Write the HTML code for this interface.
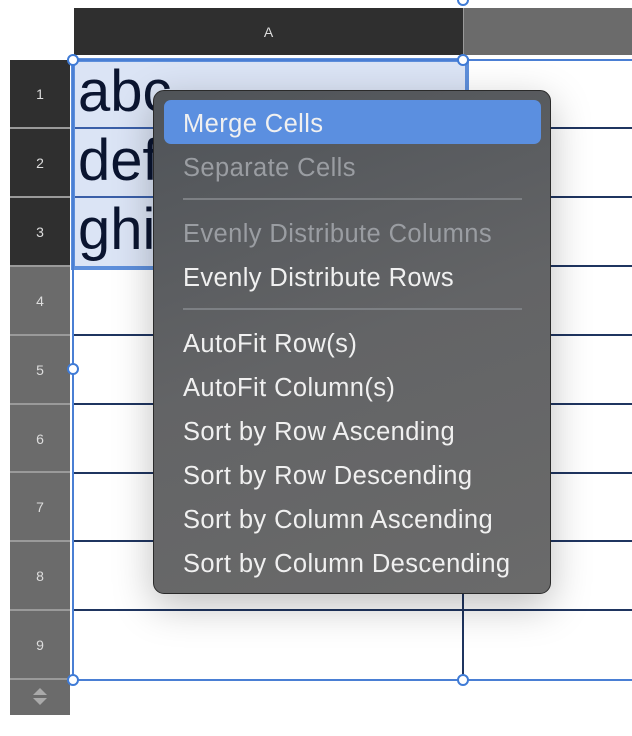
<!DOCTYPE html>
<html><head><style>
body{margin:0;width:632px;height:736px;background:#fff;position:relative;overflow:hidden;font-family:"Liberation Sans",sans-serif}
.a{position:absolute}
.rh{position:absolute;left:10px;width:60px;color:#ddd;font-size:14px;text-align:center;box-sizing:border-box;border-bottom:2px solid #9a9a9a}
.hl{position:absolute;left:73px;right:0;height:2px;background:#1f3560}
.big{position:absolute;left:78px;font-size:58px;color:#0b1530;line-height:1}
.menu{position:absolute;left:153px;top:90px;width:398px;height:504px;border-radius:11px;background:linear-gradient(160deg,#4f5358,#636466 50%,#6a6a6a);border:1px solid #2a2a2a;box-shadow:0 12px 40px rgba(0,0,0,.25);box-sizing:border-box}
.it{position:absolute;left:29px;font-size:25.5px;letter-spacing:0.4px;color:#f0f0f0;line-height:26px;white-space:nowrap}
.dis{color:#9a9da2}
.sep{position:absolute;left:29px;width:339px;height:2px;background:#7d8084}
.h{position:absolute;width:12px;height:12px;border:2px solid #3f7bd6;border-radius:50%;background:#fff;box-sizing:border-box}
</style></head><body>
<div class="a" style="left:74px;top:8px;width:389px;height:47px;background:#2f2f2f;color:#ddd;font-size:14px;text-align:center;line-height:48px">A</div>
<div class="a" style="left:464px;top:8px;width:168px;height:47px;background:#6b6b6b"></div>
<div class="a" style="left:463px;top:8px;width:1px;height:47px;background:#999"></div>

<div class="rh" style="top:60px;height:69px;line-height:69px;background:#2f2f2f">1</div>
<div class="rh" style="top:129px;height:69px;line-height:69px;background:#2f2f2f">2</div>
<div class="rh" style="top:198px;height:69px;line-height:69px;background:#2f2f2f">3</div>
<div class="rh" style="top:267px;height:69px;line-height:69px;background:#6b6b6b">4</div>
<div class="rh" style="top:336px;height:69px;line-height:69px;background:#6b6b6b">5</div>
<div class="rh" style="top:405px;height:68px;line-height:68px;background:#6b6b6b">6</div>
<div class="rh" style="top:473px;height:69px;line-height:69px;background:#6b6b6b">7</div>
<div class="rh" style="top:542px;height:69px;line-height:69px;background:#6b6b6b">8</div>
<div class="rh" style="top:611px;height:69px;line-height:69px;background:#6b6b6b">9</div>
<div class="a" style="left:10px;top:680px;width:60px;height:35px;background:#6b6b6b"></div>
<div class="a" style="left:33px;top:688px;width:0;height:0;border-left:7px solid transparent;border-right:7px solid transparent;border-bottom:7px solid #aaa"></div>
<div class="a" style="left:33px;top:698px;width:0;height:0;border-left:7px solid transparent;border-right:7px solid transparent;border-top:7px solid #aaa"></div>

<div class="hl" style="top:127px"></div><div class="hl" style="top:196px"></div><div class="hl" style="top:265px"></div>
<div class="hl" style="top:334px"></div><div class="hl" style="top:403px"></div><div class="hl" style="top:472px"></div>
<div class="hl" style="top:540px"></div><div class="hl" style="top:609px"></div>
<div class="a" style="left:462px;top:60px;width:2px;height:620px;background:#1f3560"></div>

<div class="a" style="left:71px;top:58px;width:398px;height:212px;background:#dbe4f5;border:4px solid #5e8fdb;box-sizing:border-box"></div>
<div class="hl" style="top:127px;left:75px;right:auto;width:390px;background:#3a5fa8"></div>
<div class="hl" style="top:196px;left:75px;right:auto;width:390px;background:#3a5fa8"></div>
<div class="big" style="top:63px">abc</div>
<div class="big" style="top:132px">def</div>
<div class="big" style="top:201px">ghi</div>

<div class="a" style="left:72px;top:59px;width:2px;height:622px;background:#4a7fd4"></div>
<div class="a" style="left:72px;top:679px;width:560px;height:2px;background:#4a7fd4"></div>
<div class="a" style="left:72px;top:59px;width:560px;height:2px;background:#4a7fd4"></div>
<div class="h" style="left:67px;top:54px"></div>
<div class="h" style="left:457px;top:54px"></div>
<div class="h" style="left:457px;top:-6px"></div>
<div class="h" style="left:67px;top:363px"></div>
<div class="h" style="left:67px;top:674px"></div>
<div class="h" style="left:457px;top:674px"></div>

<div class="menu">
<div class="a" style="left:10px;top:9px;width:377px;height:44px;border-radius:7px;background:#5b8fe0"></div>
<div class="it" style="top:20px">Merge Cells</div>
<div class="it dis" style="top:64px">Separate Cells</div>
<div class="sep" style="top:107px"></div>
<div class="it dis" style="top:130px">Evenly Distribute Columns</div>
<div class="it" style="top:174px">Evenly Distribute Rows</div>
<div class="sep" style="top:217px"></div>
<div class="it" style="top:240px">AutoFit Row(s)</div>
<div class="it" style="top:284px">AutoFit Column(s)</div>
<div class="it" style="top:328px">Sort by Row Ascending</div>
<div class="it" style="top:372px">Sort by Row Descending</div>
<div class="it" style="top:416px">Sort by Column Ascending</div>
<div class="it" style="top:460px">Sort by Column Descending</div>
</div>
</body></html>
